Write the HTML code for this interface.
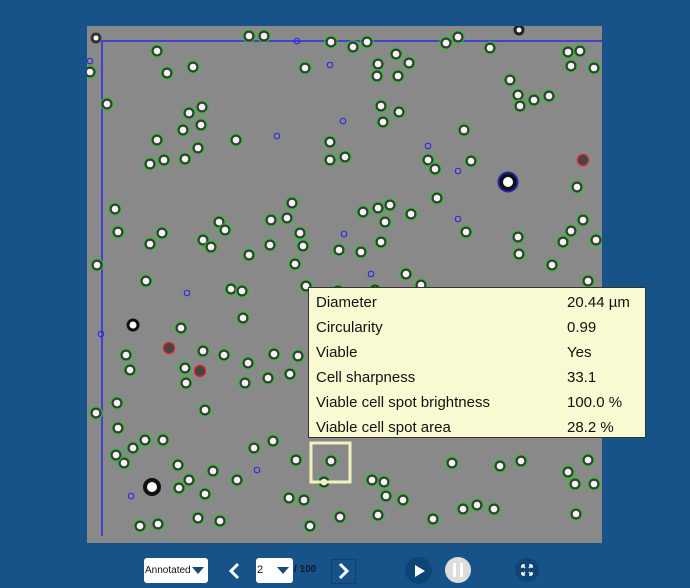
<!DOCTYPE html>
<html><head><meta charset="utf-8"><style>
html,body{margin:0;padding:0;width:690px;height:588px;overflow:hidden;background:#175389;font-family:"Liberation Sans",sans-serif}
#img{position:absolute;left:87px;top:26px;width:515px;height:517px;background:#898989;overflow:hidden}
#tip{position:absolute;left:308px;top:287px;width:336px;height:149px;background:#fafad2;border:1px solid #333;font-size:15px;color:#111}
#tip div{position:absolute;left:7px}
#tip span{position:absolute;left:258px}
.bar{position:absolute}
</style></head><body>
<div id="img">
<svg width="515" height="517" viewBox="87 26 515 517" xmlns="http://www.w3.org/2000/svg">
<defs>
<g id="c"><circle r="5.5" fill="#3a3a3a"/><circle r="3.3" fill="#f4f4f4"/><circle r="6.3" fill="none" stroke="#22cc22" stroke-width="1"/></g>
<g id="b"><circle r="2.8" fill="none" stroke="#2222ee" stroke-width="1"/></g>
<g id="r"><circle r="5.5" fill="#444" stroke="#dd2222" stroke-width="1.3"/></g>
</defs>
<path d="M102 536 V41 H602" fill="none" stroke="#2a2ae0" stroke-width="1.5"/>
<g id="cells"></g>
<circle cx="508" cy="182" r="7" fill="#fff" stroke="#111" stroke-width="4"/><circle cx="508" cy="182" r="9.5" fill="none" stroke="#2222aa" stroke-width="2"/>
<circle cx="152" cy="487" r="7" fill="#fff" stroke="#111" stroke-width="4"/>
<circle cx="133" cy="325" r="5" fill="#fff" stroke="#111" stroke-width="3"/>
<circle cx="519" cy="30" r="4" fill="#fff" stroke="#222" stroke-width="3"/>
<circle cx="96" cy="38" r="4" fill="#fff" stroke="#333" stroke-width="3"/>
<rect x="311" y="443" width="39" height="39" fill="none" stroke="#f2f2c0" stroke-width="3"/>
</svg>
</div>
<div id="tip">
<div style="top:6px">Diameter</div><span style="top:6px">20.44 µm</span>
<div style="top:31px">Circularity</div><span style="top:31px">0.99</span>
<div style="top:56px">Viable</div><span style="top:56px">Yes</span>
<div style="top:81px">Cell sharpness</div><span style="top:81px">33.1</span>
<div style="top:106px">Viable cell spot brightness</div><span style="top:106px">100.0 %</span>
<div style="top:131px">Viable cell spot area</div><span style="top:131px">28.2 %</span>
</div>
<div class="bar" style="left:144px;top:558px;width:63px;height:25px;background:#fff;border-radius:3px;font-size:10px;line-height:25px;color:#111;padding-left:1px">Annotated<span style="position:absolute;left:48px;top:9px;width:0;height:0;border-left:6px solid transparent;border-right:6px solid transparent;border-top:7px solid #174a7a"></span></div>
<svg class="bar" style="left:228px;top:562px" width="14" height="18"><path d="M10 2 L3 9 L10 16" fill="none" stroke="#fff" stroke-width="3"/></svg>
<div class="bar" style="left:256px;top:558px;width:36px;height:25px;background:#fff;border-radius:3px;font-size:11px;line-height:25px;color:#111;padding-left:1px">2<span style="position:absolute;left:21px;top:9px;width:0;height:0;border-left:6px solid transparent;border-right:6px solid transparent;border-top:7px solid #174a7a"></span></div>
<div class="bar" style="left:294px;top:564px;font-size:10px;font-weight:bold;color:#0a1a2a">/ 100</div>
<div class="bar" style="left:331px;top:559px;width:23px;height:23px;border:1px dotted #0d2e50"></div>
<svg class="bar" style="left:336px;top:562px" width="14" height="18"><path d="M4 2 L11 9 L4 16" fill="none" stroke="#fff" stroke-width="3"/></svg>
<div class="bar" style="left:405px;top:557px;width:27px;height:27px;border-radius:50%;background:#0f4574"></div>
<svg class="bar" style="left:414px;top:564px" width="12" height="14"><path d="M1 1 L11 7 L1 13Z" fill="#fff"/></svg>
<div class="bar" style="left:445px;top:557px;width:26px;height:26px;border-radius:50%;background:#ddd"></div>
<div class="bar" style="left:453px;top:563px;width:3px;height:14px;background:#fff"></div>
<div class="bar" style="left:460px;top:563px;width:3px;height:14px;background:#fff"></div>
<div class="bar" style="left:515px;top:558px;width:24px;height:24px;border-radius:50%;background:#0f4574"></div>
<svg class="bar" style="left:521px;top:564px" width="12" height="12"><path d="M1 1 L4 4 M11 1 L8 4 M1 11 L4 8 M11 11 L8 8 M1 1h3M1 1v3M11 1h-3M11 1v3M1 11h3M1 11v-3M11 11h-3M11 11v-3" stroke="#fff" stroke-width="1.5" fill="none"/></svg>
<script>
var c=[157,51,167,73,193,67,249,36,264,36,331,42,353,47,367,42,396,54,378,64,409,63,377,76,398,76,446,43,458,37,490,48,568,52,580,51,571,66,594,68,305,68,107,104,202,107,189,113,183,130,201,125,157,140,164,160,150,164,185,159,198,148,236,140,330,142,345,157,330,160,381,106,399,112,383,122,464,130,428,160,435,169,471,161,518,95,520,106,534,100,549,96,510,80,577,187,115,209,118,232,162,233,150,244,203,240,211,247,219,222,225,230,271,220,287,218,292,203,249,255,270,245,303,246,300,233,295,264,363,212,378,208,390,205,385,222,381,242,361,252,339,250,411,214,437,198,466,232,518,237,519,254,563,242,571,231,583,220,552,265,97,265,146,281,231,289,242,291,306,286,338,291,375,290,406,274,421,285,588,281,181,328,243,318,126,355,130,370,203,351,224,355,248,363,274,354,298,356,268,378,290,374,185,368,186,383,117,403,205,410,245,383,118,428,133,448,145,440,163,440,124,463,116,455,178,465,189,480,213,471,179,488,205,494,237,480,254,448,273,441,296,460,331,461,324,482,289,498,304,500,310,526,340,517,372,480,384,482,386,496,378,515,403,500,452,463,500,466,521,461,568,472,575,484,594,484,433,519,463,509,477,505,494,509,576,514,140,526,158,524,198,518,220,521,90,72,96,413,588,460,590,330,596,240];
var b=[297,41,330,65,343,121,277,136,428,146,458,171,344,234,371,274,187,293,101,334,458,219,131,496,257,470,90,61];
var r=[169,348,200,371,583,160];
var s="";
for(var i=0;i<c.length;i+=2)s+='<use href="#c" x="'+c[i]+'" y="'+c[i+1]+'"/>';
for(i=0;i<b.length;i+=2)s+='<use href="#b" x="'+b[i]+'" y="'+b[i+1]+'"/>';
for(i=0;i<r.length;i+=2)s+='<use href="#r" x="'+r[i]+'" y="'+r[i+1]+'"/>';
document.getElementById("cells").innerHTML=s;
</script>
</body></html>
